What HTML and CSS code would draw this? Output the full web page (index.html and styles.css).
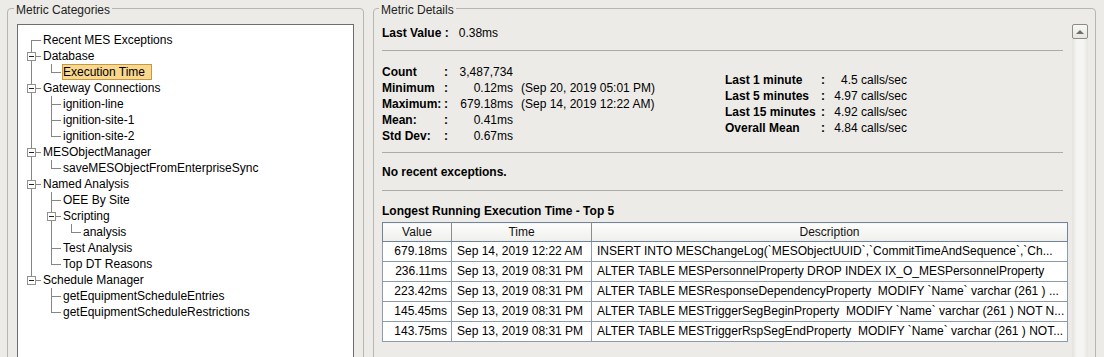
FILE: index.html
```html
<!DOCTYPE html>
<html lang="en">
<head>
  <meta charset="UTF-8">
  <title>Metrics</title>
  <link rel="stylesheet" href="styles.css">
</head>
<body>

  <fieldset class="group categories">
    <legend>Metric Categories</legend>
    <div class="tree">
      <ul>
        <li><span class="node">Recent MES Exceptions</span></li>
        <li>
          <span class="toggle"></span><span class="node">Database</span>
          <ul>
            <li><span class="node selected">Execution Time</span></li>
          </ul>
        </li>
        <li>
          <span class="toggle"></span><span class="node">Gateway Connections</span>
          <ul>
            <li><span class="node">ignition-line</span></li>
            <li><span class="node">ignition-site-1</span></li>
            <li><span class="node">ignition-site-2</span></li>
          </ul>
        </li>
        <li>
          <span class="toggle"></span><span class="node">MESObjectManager</span>
          <ul>
            <li><span class="node">saveMESObjectFromEnterpriseSync</span></li>
          </ul>
        </li>
        <li>
          <span class="toggle"></span><span class="node">Named Analysis</span>
          <ul>
            <li><span class="node">OEE By Site</span></li>
            <li>
              <span class="toggle"></span><span class="node">Scripting</span>
              <ul>
                <li><span class="node">analysis</span></li>
              </ul>
            </li>
            <li><span class="node">Test Analysis</span></li>
            <li><span class="node">Top DT Reasons</span></li>
          </ul>
        </li>
        <li>
          <span class="toggle"></span><span class="node">Schedule Manager</span>
          <ul>
            <li><span class="node">getEquipmentScheduleEntries</span></li>
            <li><span class="node">getEquipmentScheduleRestrictions</span></li>
          </ul>
        </li>
      </ul>
    </div>
  </fieldset>

  <fieldset class="group details">
    <legend>Metric Details</legend>
    <div class="details-body">
      <div class="details-content">
        <div class="last-value"><b>Last Value :</b><span class="last-number">0.38ms</span></div>
        <hr>

        <div class="stats">
          <div class="stat-grid left">
            <b>Count</b><b>:</b><span class="num">3,487,734</span><span></span>
            <b>Minimum</b><b>:</b><span class="num">0.12ms</span><span class="when">(Sep 20, 2019 05:01 PM)</span>
            <b>Maximum:</b><b>:</b><span class="num">679.18ms</span><span class="when">(Sep 14, 2019 12:22 AM)</span>
            <b>Mean:</b><b>:</b><span class="num">0.41ms</span><span></span>
            <b>Std Dev:</b><b>:</b><span class="num">0.67ms</span><span></span>
          </div>
          <div class="stat-grid right">
            <b>Last 1 minute</b><b>:</b><span class="num">4.5 calls/sec</span>
            <b>Last 5 minutes</b><b>:</b><span class="num">4.97 calls/sec</span>
            <b>Last 15 minutes</b><b>:</b><span class="num">4.92 calls/sec</span>
            <b>Overall Mean</b><b>:</b><span class="num">4.84 calls/sec</span>
          </div>
        </div>
        <hr class="after-stats">

        <div class="exceptions"><b>No recent exceptions.</b></div>
        <hr class="after-exceptions">

        <div class="top-title"><b>Longest Running Execution Time - Top 5</b></div>
        <table class="top-table">
          <colgroup>
            <col class="col-value">
            <col class="col-time">
            <col>
          </colgroup>
          <thead>
            <tr><th>Value</th><th>Time</th><th>Description</th></tr>
          </thead>
          <tbody>
            <tr>
              <td class="value">679.18ms</td>
              <td>Sep 14, 2019 12:22 AM</td>
              <td>INSERT INTO MESChangeLog(`MESObjectUUID`,`CommitTimeAndSequence`,`Ch...</td>
            </tr>
            <tr>
              <td class="value">236.11ms</td>
              <td>Sep 13, 2019 08:31 PM</td>
              <td>ALTER TABLE MESPersonnelProperty DROP INDEX IX_O_MESPersonnelProperty</td>
            </tr>
            <tr>
              <td class="value">223.42ms</td>
              <td>Sep 13, 2019 08:31 PM</td>
              <td>ALTER TABLE MESResponseDependencyProperty&nbsp; MODIFY `Name` varchar (261 ) ...</td>
            </tr>
            <tr>
              <td class="value">145.45ms</td>
              <td>Sep 13, 2019 08:31 PM</td>
              <td>ALTER TABLE MESTriggerSegBeginProperty&nbsp; MODIFY `Name` varchar (261 ) NOT N...</td>
            </tr>
            <tr>
              <td class="value">143.75ms</td>
              <td>Sep 13, 2019 08:31 PM</td>
              <td>ALTER TABLE MESTriggerRspSegEndProperty&nbsp; MODIFY `Name` varchar (261 ) NOT...</td>
            </tr>
          </tbody>
        </table>
      </div>

      <div class="scrollbar">
        <div class="scroll-up"></div>
        <div class="scroll-track"></div>
      </div>
    </div>
  </fieldset>

</body>
</html>
```

FILE: styles.css
```css
html,
body {
  height: 357px;
  overflow: hidden;
}

body {
  margin: 0;
  padding: 0 0 0 7px;
  display: flex;
  gap: 9px;
  background-color: #ecebe7;
  font-family: 'Liberation Sans', Arial, sans-serif;
  font-size: 12px;
  color: #000;
}

.group {
  margin: -2px 0 0;
  min-width: 0;
  height: 420px;
  box-sizing: border-box;
  border: 1px solid #b8b6b0;
  border-radius: 4px;
}

.group legend {
  margin-left: -3px;
  padding: 4px 2px 0;
  line-height: 16px;
  color: #222;
}

.categories {
  width: 357px;
  padding: 6px 9px 0 9px;
}

.details {
  width: 723px;
  padding: 6px 7px 0 8px;
}

/* tree */

.tree {
  height: 390px;
  background-color: #fff;
  border: 1px solid #6e6e6e;
  padding-top: 7px;
}

.tree ul {
  list-style: none;
  margin: 0;
  padding: 0;
}

.tree li {
  position: relative;
  padding-left: 20px;
}

.tree li::before {
  content: '';
  position: absolute;
  left: 13px;
  top: 0;
  bottom: 0;
  width: 1px;
  background-color: #858585;
}

.tree li:last-child::before {
  bottom: auto;
  height: 8px;
}

.tree > ul > li:first-child::before {
  top: 8px;
}

.tree li::after {
  content: '';
  position: absolute;
  left: 13px;
  top: 8px;
  width: 10px;
  height: 1px;
  background-color: #858585;
}

.toggle {
  position: absolute;
  left: 9px;
  top: 4px;
  width: 9px;
  height: 9px;
  box-sizing: border-box;
  border: 1px solid #92918a;
  background-color: #fff;
  z-index: 1;
}

.toggle::after {
  content: '';
  position: absolute;
  left: 1px;
  top: 3px;
  width: 5px;
  height: 1px;
  background-color: #222;
}

.node {
  display: inline-block;
  margin-left: 4px;
  padding: 0 6px 0 0;
  border: 1px solid transparent;
  line-height: 14px;
  white-space: nowrap;
}

.node.selected {
  background-color: #fad78f;
  border-color: #c49a3e;
}

/* details */

.details-body {
  display: flex;
  height: 100%;
}

.details-content {
  flex: 1;
  min-width: 0;
  padding-right: 4px;
}

.last-value {
  margin-top: 1px;
  line-height: 16px;
}

.last-number {
  margin-left: 10px;
}

.details-content hr {
  border: 0;
  border-top: 1px solid #adaba5;
  height: 0;
  margin: 9px 5px 0 0;
}

.stats {
  display: flex;
  align-items: center;
  margin-top: 13px;
}

.stat-grid {
  display: grid;
  line-height: 16px;
  white-space: nowrap;
}

.stat-grid.left {
  width: 343px;
  grid-template-columns: 62px 8px 61px auto;
}

.stat-grid.right {
  grid-template-columns: 96px 8px 78px;
}

.stat-grid .num {
  text-align: right;
}

.stat-grid .when {
  margin-left: 8px;
}

.details-content hr.after-stats {
  margin-top: 8px;
}

.exceptions {
  margin-top: 11px;
  line-height: 16px;
}

.details-content hr.after-exceptions {
  margin-top: 10px;
}

.top-title {
  margin-top: 12px;
  line-height: 16px;
}

.top-table {
  margin-top: 3px;
  width: 100%;
  table-layout: fixed;
  border-collapse: collapse;
  border: 1px solid #71849a;
  background-color: #fff;
}

.col-value {
  width: 69px;
}

.col-time {
  width: 140px;
}

.top-table th {
  font-weight: normal;
  line-height: 18px;
  padding: 0;
  border: 1px solid #71849a;
  border-right: 1px solid #8c8c8c;
  background: linear-gradient(#fdfdfd, #eeeeeb);
  color: #111;
}

.top-table th:last-child {
  border-right: 1px solid #71849a;
}

.top-table td {
  line-height: 19px;
  padding: 0 5px;
  border: 1px solid #8d9cad;
  white-space: nowrap;
  overflow: hidden;
}

.top-table td.value {
  text-align: right;
  padding-right: 4px;
}

/* scrollbar */

.scrollbar {
  width: 16px;
  display: flex;
  flex-direction: column;
}

.scroll-up {
  height: 15px;
  box-sizing: border-box;
  border: 1px solid #8f8c85;
  border-radius: 2px;
  background: linear-gradient(#f8f8f6, #e7e6e2);
  display: flex;
  align-items: center;
  justify-content: center;
}

.scroll-up::before {
  content: '';
  border-left: 4px solid transparent;
  border-right: 4px solid transparent;
  border-bottom: 4px solid #6e6e6e;
}

.scroll-track {
  flex: 1;
  background: linear-gradient(to right, #e3e2de, #f5f5f3 30%, #f5f5f3 70%, #e6e5e1);
}
```
